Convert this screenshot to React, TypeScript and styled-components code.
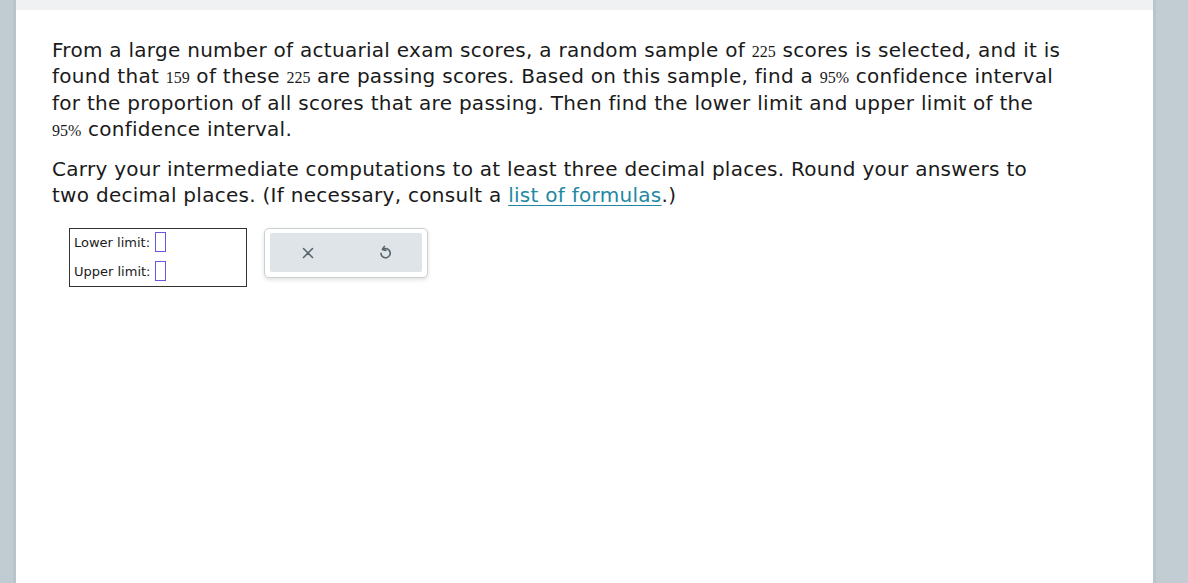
import React from "react";
import styled, { createGlobalStyle } from "styled-components";

const Global = createGlobalStyle`
  html, body { margin: 0; padding: 0; height: 100%; }
  body { background: #c1cdd3; font-family: "DejaVu Sans", Verdana, sans-serif; }
  #root { height: 100%; }
`;

const Shell = styled.div`
  display: flex;
  height: 583px;
  background: #c1cdd3;
`;

const LeftRail = styled.div`
  width: 16px;
  flex: none;
  background: linear-gradient(to right, #c0ccd2 0, #c0ccd2 13px, #b8c6cc 13px, #b8c6cc 16px);
`;

const RightRail = styled.div`
  width: 35px;
  flex: none;
  background: linear-gradient(to right, #b8c6cc 0, #b8c6cc 3px, #c1cdd3 3px);
`;

const Main = styled.main`
  flex: 1;
  background: #ffffff;
  display: flex;
  flex-direction: column;
`;

const TopBar = styled.div`
  height: 10px;
  background: #eff1f3;
`;

const Content = styled.div`
  padding: 27px 86px 0 36px;
  color: #1a1a1a;
`;

const Para = styled.p`
  margin: 0 0 13px 0;
  font-size: 20px;
  line-height: 26.4px;
  letter-spacing: 0.28px;
`;

const Num = styled.span`
  font-family: "Liberation Serif", "Times New Roman", serif;
  font-size: 16px;
  line-height: 1;
  letter-spacing: 0;
`;

const Link = styled.a`
  color: #2188a3;
  text-decoration: underline;
  text-underline-offset: 3px;
  text-decoration-thickness: 1px;
`;

const AnswerRow = styled.div`
  display: flex;
  align-items: flex-start;
  gap: 17px;
  margin-top: 20px;
  padding-left: 17px;
`;

const AnswerBox = styled.div`
  width: 172px;
  border: 1px solid #333333;
  padding: 2px 0 4px 4px;
  display: flex;
  flex-direction: column;
  gap: 7px;
`;

const FieldRow = styled.div`
  display: flex;
  align-items: center;
  gap: 5px;
  font-size: 13px;
  color: #1a1a1a;
  height: 22px;
`;

const Blank = styled.span`
  display: inline-block;
  width: 9px;
  height: 18px;
  border: 1px solid #6458e0;
`;

const ToolFrame = styled.div`
  width: 152px;
  height: 39px;
  padding: 4px 5px 5px 5px;
  border: 1px solid #c9d0d4;
  border-radius: 5px;
  background: #ffffff;
  box-shadow: 0 2px 4px rgba(0, 0, 0, 0.12);
`;

const ToolInner = styled.div`
  height: 100%;
  background: #dfe4e8;
  border-radius: 2px;
  display: flex;
  align-items: center;
  gap: 53px;
  padding: 0 0 0 26px;
`;

const IconButton = styled.button`
  border: none;
  background: transparent;
  padding: 0;
  width: 24px;
  height: 24px;
  display: flex;
  align-items: center;
  justify-content: center;
  color: #56636b;
`;

export default function App() {
  return (
    <>
      <Global />
      <Shell>
        <LeftRail />
        <Main>
          <TopBar />
          <Content>
            <Para>
              From a large number of actuarial exam scores, a random sample of <Num>225</Num> scores is selected, and it is
              found that <Num>159</Num> of these <Num>225</Num> are passing scores. Based on this sample, find a <Num>95%</Num> confidence interval
              for the proportion of all scores that are passing. Then find the lower limit and upper limit of the{" "}
              <Num>95%</Num> confidence interval.
            </Para>
            <Para>
              Carry your intermediate computations to at least three decimal places. Round your answers to two decimal
              places. (If necessary, consult a <Link href="#">list of formulas</Link>.)
            </Para>
            <AnswerRow>
              <AnswerBox>
                <FieldRow>
                  Lower limit: <Blank />
                </FieldRow>
                <FieldRow>
                  Upper limit: <Blank />
                </FieldRow>
              </AnswerBox>
              <ToolFrame>
                <ToolInner>
                  <IconButton aria-label="clear">
                    <svg width="12" height="12" viewBox="0 0 12 12">
                      <path d="M1.5 1.5 L10.5 10.5 M10.5 1.5 L1.5 10.5" stroke="currentColor" strokeWidth="1.5" strokeLinecap="round" />
                    </svg>
                  </IconButton>
                  <IconButton aria-label="undo">
                    <svg width="14" height="15" viewBox="0 0 14 15" fill="none">
                      <path d="M5 4.4 A4.6 4.6 0 1 1 3 8.4" stroke="currentColor" strokeWidth="1.6" strokeLinecap="round" />
                      <path d="M6.4 1.4 L4.4 4.4 L7.8 5.4" stroke="currentColor" strokeWidth="1.6" strokeLinecap="round" strokeLinejoin="round" />
                    </svg>
                  </IconButton>
                </ToolInner>
              </ToolFrame>
            </AnswerRow>
          </Content>
        </Main>
        <RightRail />
      </Shell>
    </>
  );
}
